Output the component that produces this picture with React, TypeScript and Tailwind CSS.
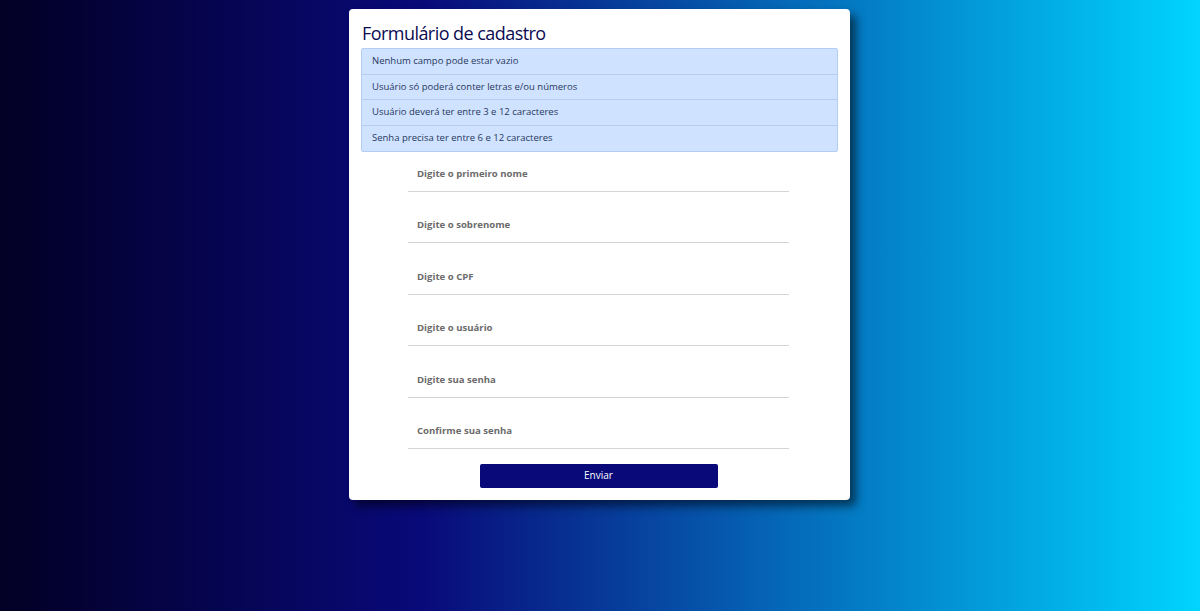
import React from "react";

const rules = [
  "Nenhum campo pode estar vazio",
  "Usuário só poderá conter letras e/ou números",
  "Usuário deverá ter entre 3 e 12 caracteres",
  "Senha precisa ter entre 6 e 12 caracteres",
];

const fields = [
  { ph: "Digite o primeiro nome", type: "text" },
  { ph: "Digite o sobrenome", type: "text" },
  { ph: "Digite o CPF", type: "text" },
  { ph: "Digite o usuário", type: "text" },
  { ph: "Digite sua senha", type: "password" },
  { ph: "Confirme sua senha", type: "password" },
];

export default function App() {
  return (
    <div
      className="min-h-screen w-full bg-[linear-gradient(90deg,#020024_0%,#090979_35%,#00d4ff_100%)] pt-[9px]"
      style={{ fontFamily: '"Open Sans", "Noto Sans", sans-serif' }}
    >
      <div className="ml-[349px] w-[501px] rounded-[4px] bg-white px-[12px] pb-[12px] pt-[10px] shadow-[6px_6px_10px_rgba(0,0,0,0.55)]">
        <h1 className="pl-[1px] text-[18px] font-medium leading-[28px] tracking-[-0.55px] text-[#0b0b52]">
          Formulário de cadastro
        </h1>
        <ul className="mt-[1px] rounded-[2px] border border-[#b3cdf3] bg-[#cfe2ff]">
          {rules.map((r, i) => (
            <li
              key={r}
              className={`flex h-[25.5px] items-center px-[10px] text-[9.5px] text-[#27385e] ${
                i < rules.length - 1 ? "border-b border-[#b3cdf3]" : ""
              }`}
            >
              {r}
            </li>
          ))}
        </ul>
        <form className="ml-[47px] mt-[4px] flex w-[381px] flex-col gap-[15.4px]">
          {fields.map((f) => (
            <input
              key={f.ph}
              type={f.type}
              placeholder={f.ph}
              className="h-[36px] w-full border-b border-[#d4d4d4] px-[9px] text-[9.6px] font-bold text-[#555] outline-none placeholder:text-[#6b6b6b]"
            />
          ))}
          <button
            type="button"
            className="mx-auto mt-[-0.5px] h-[24px] w-[238px] rounded-[2px] bg-[#09097a] text-[10px] font-medium text-white"
          >
            Enviar
          </button>
        </form>
      </div>
    </div>
  );
}
